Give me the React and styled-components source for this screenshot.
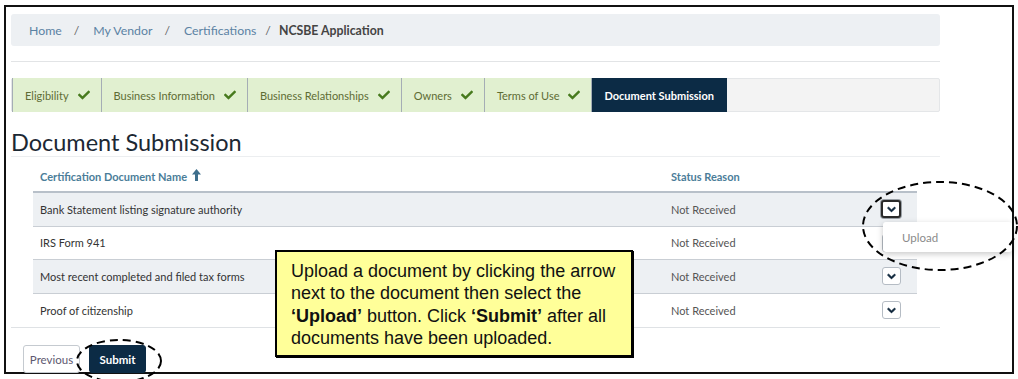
import styled, { createGlobalStyle } from 'styled-components'
import { FaCheck, FaChevronDown } from 'react-icons/fa'

const GlobalStyle = createGlobalStyle`
  html, body { margin:0; padding:0; background:#fff; }
  body { font-family: Lato, "Open Sans", sans-serif; color:#333; }
  * { box-sizing:border-box; }
`

const Stage = styled.div`
  position:relative;
  width:1018px;
  height:379px;
  overflow:hidden;
`

const Frame = styled.div`
  margin:5px 0 0 4px;
  width:1010px;
  height:369px;
  border:2px solid #111;
  padding:7px 0 0 5px;
`

const Content = styled.div`
  width:929px;
  display:flex;
  flex-direction:column;
`

const Breadcrumb = styled.nav`
  height:32px;
  background:#edf0f3;
  border-radius:3px;
  display:flex;
  align-items:center;
  padding-left:18px;
  font-size:12.3px;
`

const Crumb = styled.span`
  color:${({current})=>(current ? '#444' : '#5b82a3')};
  font-weight:${({current})=>(current ? 700 : 400)};
`

const Slash = styled.span`
  color:#666;
  margin:${({tight})=>(tight ? '0 8px 0 9px' : '0 14px 0 12px')};
`

const Divider = styled.hr`
  border:none;
  border-top:1px solid #e2e4e6;
  margin:15px 0 16px;
  width:100%;
`

const TabBar = styled.div`
  height:34px;
  display:flex;
  background:#f3f3f3;
  border:1px solid #e4e6e8;
  border-radius:2px;
`

const Tab = styled.div`
  display:flex;
  align-items:center;
  gap:9px;
  padding:0 ${({active})=>(active ? '12px' : '11px')} 0 12px;
  font-size:11px;
  background:${({active})=>(active ? '#0c2b45' : '#e1f0d0')};
  color:${({active})=>(active ? '#fff' : '#5e6c34')};
  font-weight:${({active})=>(active ? 700 : 400)};
  border-right:1px solid ${({active})=>(active ? '#0c2b45' : '#a5adb5')};
  margin-top:-1px;
  margin-bottom:-1px;
  &:first-child{ border-left:1px solid #a5adb5; }
  svg{ color:#477a1d; font-size:12px; }
`

const Heading = styled.h1`
  margin:16px 0 0;
  font-size:23.5px;
  font-weight:400;
  color:#1c2833;
  line-height:28px;
  border-bottom:1px solid #eceef0;
`

const Table = styled.div`
  margin:0 23px 0 22px;
`

const Row = styled.div`
  display:grid;
  grid-template-columns:631px 1fr auto;
  align-items:center;
  height:${({head})=>(head ? '36px' : '33.5px')};
  padding:${({head})=>(head ? '4px 16px 0 7px' : '0 16px 0 7px')};
  font-size:11px;
  background:${({shaded})=>(shaded ? '#edf0f3' : 'transparent')};
  border-bottom:${({head})=>(head ? '2px solid #b8c0c9' : '1px solid #c9ced4')};
  &:last-child{ border-bottom:none; }
`

const HeadCell = styled.div`
  color:#4b7d99;
  font-weight:700;
  display:flex;
  align-items:center;
  gap:5px;
`

const SortArrow = styled.svg`
  width:9px;
  height:12px;
  fill:#3f6f8c;
  margin-top:-2px;
`

const Cell = styled.div`
  color:${({muted})=>(muted ? '#555' : '#333')};
`

const MenuButton = styled.button`
  width:${({focused})=>(focused ? '20px' : '19px')};
  height:18px;
  padding:0;
  display:flex;
  align-items:center;
  justify-content:center;
  background:#fff;
  border:${({focused})=>(focused ? '2px solid #2a2a2a' : '1px solid #b5bcc4')};
  box-shadow:${({focused})=>(focused ? '0 0 0 1px #9aa0a6' : 'none')};
  border-radius:3px;
  svg{ font-size:9px; color:#0a2238; stroke:currentColor; stroke-width:50px; }
`

const TableFoot = styled.div`
  border-top:1px solid #dfe2e5;
`

const Actions = styled.div`
  display:flex;
  gap:9px;
  margin:17px 0 0 12px;
`

const Button = styled.button`
  width:57px;
  height:28px;
  border-radius:3px;
  font-family:inherit;
  font-size:11.5px;
  background:${({primary})=>(primary ? '#0c2b45' : '#fff')};
  color:${({primary})=>(primary ? '#fff' : '#5d5870')};
  font-weight:${({primary})=>(primary ? 700 : 400)};
  border:1px solid ${({primary})=>(primary ? '#0c2b45' : '#c5cad0')};
  padding:0;
`

const Callout = styled.div`
  position:absolute;
  left:275px;
  top:250px;
  width:358px;
  height:107px;
  background:#ffff99;
  border:2px solid #000;
  box-shadow:1px 1px 0 #000;
  padding:8px 0 0 14px;
  font-family:"Liberation Sans", Arial, sans-serif;
  font-size:18px;
  line-height:22.3px;
  color:#111;
  white-space:nowrap;
  b{ font-weight:700; }
`

const DropMenu = styled.div`
  position:absolute;
  left:883px;
  top:222px;
  width:129px;
  height:30px;
  background:#fff;
  border-radius:3px;
  box-shadow:0 2px 6px rgba(0,0,0,0.22);
  display:flex;
  align-items:center;
  padding-left:19px;
  font-size:11.5px;
  color:#8a8a8a;
`

const Ring = styled.svg`
  position:absolute;
  left:${({x})=>x}px;
  top:${({y})=>y}px;
  overflow:visible;
`

const docs = [
  'Bank Statement listing signature authority',
  'IRS Form 941',
  'Most recent completed and filed tax forms',
  'Proof of citizenship',
]

const tabs = ['Eligibility', 'Business Information', 'Business Relationships', 'Owners', 'Terms of Use']

export default function App() {
  return (
    <Stage>
      <GlobalStyle />
      <Frame>
        <Content>
          <Breadcrumb>
            <Crumb>Home</Crumb>
            <Slash>/</Slash>
            <Crumb>My Vendor</Crumb>
            <Slash>/</Slash>
            <Crumb>Certifications</Crumb>
            <Slash tight>/</Slash>
            <Crumb current>NCSBE Application</Crumb>
          </Breadcrumb>
          <Divider />
          <TabBar>
            {tabs.map((t) => (
              <Tab key={t}>{t}<FaCheck /></Tab>
            ))}
            <Tab active>Document Submission</Tab>
          </TabBar>
          <Heading>Document Submission</Heading>
          <Table>
            <Row head>
              <HeadCell>
                Certification Document Name
                <SortArrow viewBox="0 0 9 12"><path d="M4.5 0 L9 5.5 L6 5.5 L6 12 L3 12 L3 5.5 L0 5.5 Z" /></SortArrow>
              </HeadCell>
              <HeadCell>Status Reason</HeadCell>
              <div />
            </Row>
            {docs.map((d, i) => (
              <Row key={d} shaded={i % 2 === 0}>
                <Cell>{d}</Cell>
                <Cell muted>Not Received</Cell>
                <MenuButton focused={i === 0}><FaChevronDown /></MenuButton>
              </Row>
            ))}
          </Table>
          <TableFoot />
          <Actions>
            <Button>Previous</Button>
            <Button primary>Submit</Button>
          </Actions>
        </Content>
      </Frame>

      <DropMenu>Upload</DropMenu>

      <Callout>
        Upload a document by clicking the arrow<br />
        next to the document then select the<br />
        <b>‘Upload’</b> button. Click <b>‘Submit’</b> after all<br />
        documents have been uploaded.
      </Callout>

      <Ring x={860} y={179} width="160" height="96">
        <ellipse cx="80" cy="47" rx="77" ry="44" fill="none" stroke="#000" strokeWidth="2" strokeDasharray="8 5" />
      </Ring>
      <Ring x={74} y={338} width="90" height="50">
        <ellipse cx="45" cy="23" rx="42" ry="21" fill="none" stroke="#000" strokeWidth="2" strokeDasharray="8 5" />
      </Ring>
    </Stage>
  )
}
